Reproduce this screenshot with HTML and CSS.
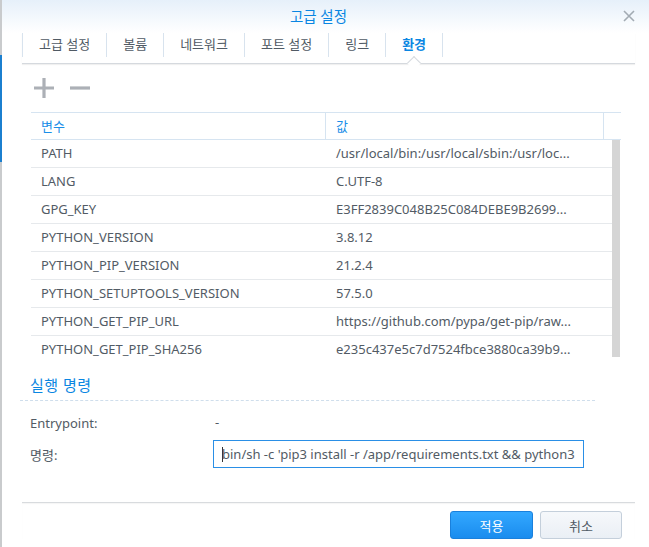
FILE: index.html
```html
<!DOCTYPE html>
<html lang="ko">
<head>
  <meta charset="UTF-8">
  <title>고급 설정</title>
  <link rel="stylesheet" href="styles.css">
</head>
<body>
  <div class="backdrop">
    <div class="backdrop-blue"></div>
  </div>
  <div class="dialog">
    <div class="title-bar">
      <span></span>
      <div class="title">고급 설정</div>
      <svg class="close" width="12" height="12" viewBox="0 0 12 12">
        <path d="M1 1 L11 11 M11 1 L1 11" stroke="#a3abb3" stroke-width="1.6" fill="none"/>
      </svg>
    </div>

    <div class="tabs">
      <div class="tab">고급 설정</div>
      <div class="tab">볼륨</div>
      <div class="tab">네트워크</div>
      <div class="tab">포트 설정</div>
      <div class="tab">링크</div>
      <div class="tab active">환경</div>
    </div>

    <div class="toolbar">
      <svg width="22" height="22" viewBox="0 0 22 22">
        <path d="M11 1 V21 M1 11 H21" stroke="#acb0b6" stroke-width="3.2" fill="none"/>
      </svg>
      <svg width="22" height="22" viewBox="0 0 22 22">
        <path d="M1 11 H21" stroke="#acb0b6" stroke-width="3.2" fill="none"/>
      </svg>
    </div>

    <div class="grid">
      <div class="grid-head">
        <div class="col-name">변수</div>
        <div class="col-value">값</div>
        <div class="col-pad"></div>
      </div>
      <div class="grid-body">
        <div class="rows">
          <div class="row"><div class="col-name">PATH</div><div class="col-value">/usr/local/bin:/usr/local/sbin:/usr/loc...</div></div>
          <div class="row"><div class="col-name">LANG</div><div class="col-value">C.UTF-8</div></div>
          <div class="row"><div class="col-name">GPG_KEY</div><div class="col-value">E3FF2839C048B25C084DEBE9B2699...</div></div>
          <div class="row"><div class="col-name">PYTHON_VERSION</div><div class="col-value">3.8.12</div></div>
          <div class="row"><div class="col-name">PYTHON_PIP_VERSION</div><div class="col-value">21.2.4</div></div>
          <div class="row"><div class="col-name">PYTHON_SETUPTOOLS_VERSION</div><div class="col-value">57.5.0</div></div>
          <div class="row"><div class="col-name">PYTHON_GET_PIP_URL</div><div class="col-value">https://github.com/pypa/get-pip/raw...</div></div>
          <div class="row"><div class="col-name">PYTHON_GET_PIP_SHA256</div><div class="col-value">e235c437e5c7d7524fbce3880ca39b9...</div></div>
        </div>
        <div class="scrollbar"></div>
      </div>
    </div>

    <div class="section-title"><span>실행 명령</span></div>
    <div class="form-row">
      <div class="form-label">Entrypoint:</div>
      <div class="form-value">-</div>
    </div>
    <div class="form-row">
      <div class="form-label">명령:</div>
      <div class="text-field"><span class="caret"></span>bin/sh -c 'pip3 install -r /app/requirements.txt &amp;&amp; python3</div>
    </div>

    <div class="footer">
      <button class="btn btn-primary">적용</button>
      <button class="btn">취소</button>
    </div>
  </div>
</body>
</html>
```

FILE: styles.css
```css
* {
  box-sizing: border-box;
}

body {
  margin: 0;
  width: 649px;
  height: 547px;
  display: flex;
  font-family: "Noto Sans", "Noto Sans CJK KR", sans-serif;
  font-size: 13px;
  color: #525b65;
  background: #fff;
  overflow: hidden;
}

.backdrop {
  width: 2px;
  background: #c9cbcd;
  padding-top: 55px;
}

.backdrop-blue {
  height: 107px;
  background: #1b7fcf;
}

.dialog {
  flex: 1;
  display: flex;
  flex-direction: column;
  background: #fff;
}

.title-bar {
  height: 33px;
  display: grid;
  grid-template-columns: 1fr auto 1fr;
  align-items: center;
  background: linear-gradient(#e6f0fa, #fff);
  padding: 0 14px 2px 0;
}

.title {
  font-size: 14.5px;
  color: #0a86e2;
}

.close {
  justify-self: end;
}

.tabs {
  display: flex;
  height: 31px;
  margin: 0 14px 0 20px;
  border-bottom: 1px solid #d5d9de;
  box-shadow: 0 1px 1px rgba(0, 0, 0, 0.06);
}

.tab {
  position: relative;
  height: 24px;
  line-height: 22px;
  padding: 0 16px;
  font-size: 13px;
  border-left: 1px solid #d8e3ee;
  color: #505a64;
}

.tab:last-child {
  border-right: 1px solid #d8e3ee;
}

.tab.active {
  color: #0a86e2;
  font-weight: bold;
}

.tab.active::after {
  content: "";
  position: absolute;
  left: 50%;
  bottom: -11px;
  width: 9px;
  height: 9px;
  margin-left: -5px;
  background: #fff;
  border-left: 1px solid #d5d9de;
  border-top: 1px solid #d5d9de;
  transform: rotate(45deg);
}

.toolbar {
  height: 48px;
  display: flex;
  align-items: center;
  gap: 14px;
  padding: 0 0 0 31px;
}

.grid {
  margin-left: 29px;
  width: 590px;
}

.grid-head {
  display: flex;
  height: 28px;
  border-top: 1px solid #d6e4f1;
  border-bottom: 1px solid #d6e4f1;
  color: #1a8ee8;
  line-height: 26px;
}

.grid-head .col-name {
  border-right: 1px solid #d6e4f1;
}

.grid-head .col-value {
  width: 278px;
  border-right: 1px solid #d6e4f1;
}

.col-name {
  width: 295px;
  padding-left: 10px;
  white-space: nowrap;
}

.col-value {
  padding-left: 10px;
  white-space: nowrap;
}

.col-pad {
  flex: 1;
}

.grid-body {
  display: flex;
  height: 217px;
  overflow: hidden;
}

.rows {
  flex: 1;
}

.row {
  display: flex;
  height: 28px;
  line-height: 26px;
  border-bottom: 1px solid #e6e9ec;
}

.scrollbar {
  width: 8px;
  margin-right: 1px;
  background: #d5d5d5;
}

.section-title {
  margin: 18px 0 0 18px;
  width: 575px;
  height: 26px;
  padding-left: 10px;
  border-bottom: 1px dashed #cfdeec;
  font-size: 15px;
  letter-spacing: 0.5px;
  color: #0a86e2;
  line-height: 20px;
}

.form-row {
  display: flex;
  align-items: center;
  height: 28px;
  margin-left: 28px;
}

.form-row + .form-row {
  margin-top: 4px;
}

.section-title + .form-row {
  margin-top: 7px;
}

.form-label {
  width: 183px;
  padding-top: 1px;
}

.form-value {
  padding-left: 2px;
}

.text-field {
  width: 371px;
  height: 28px;
  border: 1px solid #2a8fe6;
  padding-left: 8px;
  font-size: 13px;
  line-height: 26px;
  white-space: nowrap;
  overflow: hidden;
  display: flex;
  align-items: center;
}

.caret {
  width: 1px;
  height: 15px;
  background: #333;
  margin-right: -1px;
}

.footer {
  margin: 34px 14px 0 20px;
  border-top: 1px solid #d8dbde;
  box-shadow: inset 0 1px 1px rgba(0, 0, 0, 0.04);
  padding: 8px 13px 0 0;
  display: flex;
  justify-content: flex-end;
  gap: 7px;
}

.btn {
  width: 82px;
  height: 28px;
  border: 1px solid #c4cfdb;
  border-radius: 3px;
  background: linear-gradient(#f6f8fb, #eaeff5);
  font-family: inherit;
  font-size: 13px;
  color: #505a64;
  padding: 0;
}

.btn-primary {
  width: 83px;
  border-color: #1a80dc;
  background: linear-gradient(#33a8ff, #1a8cee);
  color: #fff;
}
```
